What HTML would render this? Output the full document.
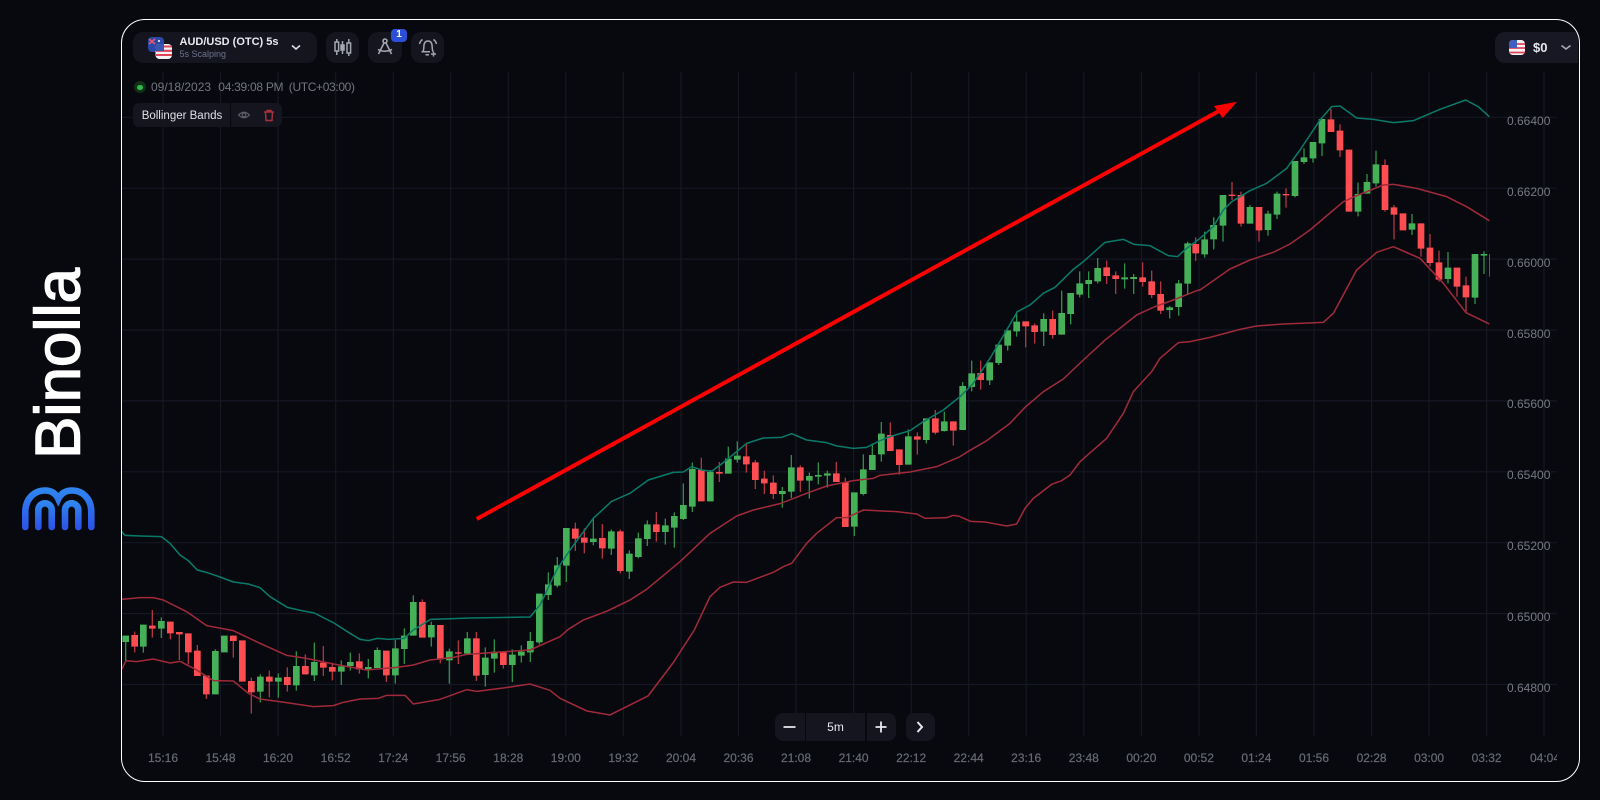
<!DOCTYPE html>
<html lang="en"><head><meta charset="utf-8"><title>Binolla AUD/USD Bollinger Bands</title>
<style>
html,body{margin:0;padding:0;background:#07090f;}
#p{position:relative;width:1600px;height:800px;overflow:hidden;background:#07090f;font-family:"Liberation Sans",sans-serif;}
#p svg{position:absolute;left:0;top:0;}
.a{position:absolute;white-space:nowrap;}
.pill{position:absolute;background:#14151f;}
.t{position:absolute;top:751px;width:50px;margin-left:-25px;text-align:center;font-size:12px;line-height:14px;color:#686a74;-webkit-text-stroke:.2px #686a74;}
.y{position:absolute;left:1507px;font-size:12px;line-height:14px;color:#777983;}
.d{position:absolute;top:80px;font-size:12px;line-height:14px;color:#74767f;white-space:nowrap;}
.gw{stroke:#2f8f48;stroke-width:4;fill:none}
.gb{stroke:#45b058;stroke-width:20;fill:none}
.rw{stroke:#b03540;stroke-width:4;fill:none}
.rb{stroke:#ff4d52;stroke-width:20;fill:none}
.up{stroke:#0a7a68;stroke-width:4.6;fill:none;stroke-linejoin:round}
.re{stroke:#a02a3a;stroke-width:4.6;fill:none;stroke-linejoin:round}
</style></head><body><div id="p">

<svg width="1600" height="800" viewBox="0 0 1600 800">
<defs>
<linearGradient id="lg" x1="0" y1="0" x2="0" y2="1"><stop offset="0" stop-color="#2f84ee"/><stop offset="1" stop-color="#2d55e8"/></linearGradient>
<clipPath id="c"><rect x="122" y="70" width="1368" height="670"/></clipPath>
</defs>
<g stroke="#161723" stroke-width="1.2" fill="none">
<path d="M163 72V736M220.5 72V736M278 72V736M335.7 72V736M393.2 72V736M450.7 72V736M508.3 72V736M565.8 72V736M623.4 72V736M681 72V736M738.5 72V736M796 72V736M853.6 72V736M911.2 72V736M968.7 72V736M1026.2 72V736M1083.8 72V736M1141.4 72V736M1198.9 72V736M1256.4 72V736M1314 72V736M1371.6 72V736M1429.1 72V736M1486.6 72V736M1544 72V736"/>
<path d="M122 117.3H1557M122 188.2H1557M122 259.1H1557M122 330H1557M122 400.9H1557M122 471.8H1557M122 542.7H1557M122 613.6H1557M122 684.5H1557"/>
</g>
<g clip-path="url(#c)">
<g transform="translate(120 510) scale(.33333)">
<path class="gw" d="M17 377V455M70 344V428M124 322V384M286 418V553M421 493V577M475 490V563M529 424V542M583 398V513M664 451V525M691 428V482M745 447V505M772 412V474M826 390V521M853 355V462M880 256V377M934 335V410M988 416V521M1042 366V431M1096 412V530M1123 388V488M1177 418V516M1204 406V458M1231 366V456M1258 251V403"/>
<path class="rw" d="M44 365V427M97 300V383M151 335V388M178 366V450M205 370V463M232 405V498M259 497V567M340 377V443M394 503V611M448 482V562M502 472V545M556 433V493M610 408V498M637 458V511M718 430V491M799 422V516M907 268V383M961 345V460M1015 391V462M1069 366V513M1150 427V476"/>
<path class="gb" d="M17 377V396M70 344V410M124 333V356M286 423V553M313 377V427M421 500V545M475 503V515M529 468V526M583 456V496M664 469V485M691 456V468M745 471V480M772 420V474M826 415V496M853 377V417M880 276V377M934 345V382M988 424V451M1042 385V431M1096 443V495M1123 425V446M1177 434V465M1204 425V437M1231 393V427M1258 251V397"/>
<path class="rb" d="M44 375V410M97 347V356M151 335V370M178 366V373M205 370V427M232 422V498M259 497V553M340 377V393M367 391V515M394 513V547M448 500V515M502 501V525M556 468V493M610 458V473M637 471V485M718 454V478M799 422V496M907 276V383M961 345V448M1015 427V431M1069 385V497M1150 427V465"/>
</g>
<g transform="translate(520 410) scale(.33333)">
<path class="gw" d="M85 487V570M112 441V532M139 354V516M220 323V406M274 358V435M328 421V507M355 368V445M382 331V408M436 326V404M463 307V413M490 220V330M517 158V306M571 180V274M625 110V191M652 94V158M787 231V293M814 135V264M868 188V266M895 157V223M922 182V233M1003 247V378M1030 133V256M1057 100V180M1084 36V155M1165 58V164M1219 25V100M1273 5V65"/>
<path class="rw" d="M166 338V423M193 355V430M247 342V446M301 358V490M409 306V395M544 143V274M598 156V216M679 102V188M706 150V237M733 182V252M760 196V267M841 166V246M949 156V216M976 203V351M1111 37V123M1138 118V194M1192 67V134M1246 0V73M1300 34V107"/>
<path class="gb" d="M85 523V555M112 466V527M139 354V467M220 386V396M274 364V416M328 431V485M355 385V441M382 343V387M436 346V366M463 318V353M490 285V327M517 177V290M571 186V274M625 146V191M652 137V149M787 243V252M814 172V245M868 198V212M895 195V200M922 190V197M1003 247V350M1030 178V252M1057 135V180M1084 71V133M1165 79V164M1219 25V90M1273 34V63"/>
<path class="rb" d="M166 356V386M193 383V398M247 384V415M301 364V483M409 343V366M544 180V274M598 186V191M679 139V163M706 157V210M733 206V220M760 218V252M841 172V212M949 190V216M976 216V351M1111 75V123M1138 118V165M1192 79V89M1246 25V68M1300 34V62"/>
</g>
<g transform="translate(940 250) scale(.33333)">
<path class="gw" d="M68 396V540M95 332V424M149 337V405M176 284V345M203 241V302M230 185V260M311 190V288M365 122V254M392 129V223M419 64V142M446 64V144M473 24V100M554 40V116M581 72V132M689 168V205M716 90V197"/>
<path class="rw" d="M122 332V419M257 214V292M284 220V281M338 182V266M500 32V102M527 64V132M608 37V110M635 62V144M662 94V192"/>
<path class="gb" d="M68 408V540M95 370V411M149 337V391M176 284V339M203 241V287M230 215V244M311 207V245M365 189V254M392 129V192M419 100V134M446 90V102M473 54V94M554 82V88M581 81V87M689 172V180M716 100V171"/>
<path class="rb" d="M122 369V390M257 214V229M284 226V246M338 207V255M500 52V78M527 76V87M608 82V96M635 94V135M662 132V182"/>
</g>
<g transform="translate(1040 215) scale(.33333)">
<path class="gw" d="M443 80V240M494 50V128M521 8V100"/>
<path class="rw" d="M467 67V138"/>
<path class="gb" d="M443 85V206M494 73V118M521 30V72"/>
<path class="rb" d="M467 87V115"/>
</g>
<g transform="translate(1200 90) scale(.33333)">
<path class="gw" d="M41 382V478M69 315V455M150 345V401M204 362V437M231 305V387M285 213V322M312 175V222M339 156V218M366 87V198M474 278V379M501 252V311M528 182V290M636 372V435M744 486V580M825 492V642M852 484V552"/>
<path class="rw" d="M96 276V330M123 305V410M177 351V455M258 295V353M393 57V126M420 103V201M447 179V365M555 208V365M582 345V448M663 400V500M690 432V530M717 482V575M771 533V620M798 560V668M869 492V560"/>
<path class="gb" d="M41 405V448M69 315V407M150 351V401M204 371V420M231 311V374M285 213V318M312 202V216M339 156V205M366 87V160M474 312V365M501 276V311M528 223V280M636 400V419M744 533V567M825 492V623M852 492V497"/>
<path class="rb" d="M96 314V318M123 315V401M177 351V421M258 312V316M393 88V126M420 122V181M447 179V365M555 225V360M582 352V374M609 370V421M663 400V476M690 473V519M717 517V569M771 533V590M798 586V622"/>
</g>
<!-- upper band -->
<g transform="translate(120 510) scale(.33333)"><path class="up" d="M5 65L15 76L60 78L124 80L150 100L180 135L205 152L232 180L262 188L300 201L340 216L385 222L420 233L450 260L502 292L545 302L583 309L640 338L690 370L720 388L745 392L772 385L805 388L853 385L880 360L932 328L1000 326L1050 324L1230 321L1260 285L1310 180"/></g>
<g transform="translate(520 410) scale(.33333)"><path class="up" d="M110 480L150 420L220 325L275 274L330 250L385 210L460 187L490 186L515 170L545 180L575 184L620 150L680 100L730 84L785 82L815 71L860 90L920 98L950 108L1000 115L1040 112L1080 92L1110 80L1170 62L1210 35L1270 0"/></g>
<g transform="translate(940 250) scale(.33333)"><path class="up" d="M10 480L60 440L100 400L150 325L200 240L232 185L270 165L310 130L345 112"/></g>
<g transform="translate(1040 215) scale(.33333)"><path class="up" d="M45 217L100 163L130 140L195 82L250 73L282 88L330 92L385 122L412 125L440 100L480 70"/></g>
<g transform="translate(1200 90) scale(.33333)"><path class="up" d="M0 445L40 410L70 360L95 335L150 302L200 280L260 235L300 180L360 90L395 50L420 48L470 84L520 88L580 98L640 92L720 58L797 30L835 50L868 80"/></g>
<!-- middle band -->
<g transform="translate(120 510) scale(.33333)"><path class="re" d="M5 268L60 263L100 263L130 270L200 305L260 347L340 362L420 400L500 436L560 445L640 462L740 480L830 472L880 465L930 450L1000 442L1040 433L1230 420L1320 380L1345 358"/></g>
<g transform="translate(520 410) scale(.33333)"><path class="re" d="M145 658L190 630L260 604L330 570L380 538L480 455L570 370L650 318L700 300L780 281L860 250L920 228L1000 212L1060 205L1080 196L1170 186L1250 170L1320 140"/></g>
<g transform="translate(950 320) scale(.33333)"><path class="re" d="M30 410L50 397L110 362L180 310L225 262L280 215L340 177L400 120L460 65"/></g>
<g transform="translate(940 250) scale(.33333)"><path class="re" d="M489 275L590 195L640 172L700 150L770 122"/></g>
<g transform="translate(1200 90) scale(.33333)"><path class="re" d="M-10 602L0 600L90 537L150 510L220 487L270 462L330 420L430 335L470 317L550 285L580 283L650 295L740 320L800 350L868 392"/></g>
<!-- lower band -->
<g transform="translate(120 510) scale(.33333)"><path class="re" d="M5 478L18 452L50 455L100 447L150 459L180 454L230 480L280 512L340 513L385 550L420 567L500 578L580 590L640 587L670 577L720 567L775 565L800 556L855 556L880 582L960 568L1040 539L1070 544L1150 534L1230 522L1290 541L1320 565L1401 603L1470 615L1584 558L1659 459L1723 360"/></g>
<g transform="translate(520 410) scale(.33333)"><path class="re" d="M523 660L570 560L600 532L640 516L680 517L760 487L790 470L815 460L860 400L890 370L950 323L980 323L1030 300L1130 305L1190 312L1215 325L1280 323L1300 316L1320 319"/></g>
<g transform="translate(950 320) scale(.33333)"><path class="re" d="M30 590L62 604L105 606L170 618L200 612L225 565L250 535L305 493L335 482L360 465L390 425L470 355L520 280L550 215L605 155L630 115L685 68L720 65L780 52"/></g>
<g transform="translate(1200 90) scale(.33333)"><path class="re" d="M30 742L120 718L170 708L250 702L370 697L400 670L470 540L530 487L580 470L660 505L730 580L798 668L868 702"/></g>
</g>
<!-- arrow -->
<path d="M476.7 519L1219 111" stroke="#fe0000" stroke-width="4" fill="none"/>
<path d="M1237 101.7L1214 106L1222.7 118Z" fill="#fe0000"/>
<!-- logo -->
<g fill="none" stroke="url(#lg)" stroke-width="6.6" stroke-linecap="round">
<path d="M25.3 527V512C25.3 498 35 490.5 45 490.5C52 490.5 56 494 58.3 499C60.7 494 65 490.5 72 490.5C82 490.5 91.3 498 91.3 512V527"/>
<path d="M38.3 527V510A6.7 6.7 0 0 1 51.7 510V527"/>
<path d="M65 527V510A6.65 6.65 0 0 1 78.3 510V527"/>
</g>
<text transform="translate(79.5 459) rotate(-90)" x="0" y="0" font-family="Liberation Sans" font-size="63" fill="#fff" stroke="#fff" stroke-width="1.5" textLength="191" lengthAdjust="spacingAndGlyphs">Binolla</text>
</svg>

<div class="y" style="top:114px">0.66400</div>
<div class="y" style="top:185px">0.66200</div>
<div class="y" style="top:256px">0.66000</div>
<div class="y" style="top:327px">0.65800</div>
<div class="y" style="top:397px">0.65600</div>
<div class="y" style="top:468px">0.65400</div>
<div class="y" style="top:539px">0.65200</div>
<div class="y" style="top:610px">0.65000</div>
<div class="y" style="top:681px">0.64800</div>

<div class="t" style="left:163px">15:16</div><div class="t" style="left:220.5px">15:48</div><div class="t" style="left:278px">16:20</div><div class="t" style="left:335.7px">16:52</div><div class="t" style="left:393.2px">17:24</div><div class="t" style="left:450.7px">17:56</div><div class="t" style="left:508.3px">18:28</div><div class="t" style="left:565.8px">19:00</div><div class="t" style="left:623.4px">19:32</div><div class="t" style="left:681px">20:04</div><div class="t" style="left:738.5px">20:36</div><div class="t" style="left:796px">21:08</div><div class="t" style="left:853.6px">21:40</div><div class="t" style="left:911.2px">22:12</div><div class="t" style="left:968.7px">22:44</div><div class="t" style="left:1026.2px">23:16</div><div class="t" style="left:1083.8px">23:48</div><div class="t" style="left:1141.4px">00:20</div><div class="t" style="left:1198.9px">00:52</div><div class="t" style="left:1256.4px">01:24</div><div class="t" style="left:1314px">01:56</div><div class="t" style="left:1371.6px">02:28</div><div class="t" style="left:1429.1px">03:00</div><div class="t" style="left:1486.6px">03:32</div>
<div class="a" style="left:1530px;top:751px;width:27px;overflow:hidden;font-size:12px;line-height:14px;color:#686a74;-webkit-text-stroke:.2px #686a74">04:04</div>

<!-- top bar -->
<div class="pill" style="left:133px;top:32px;width:184px;height:31px;border-radius:10px"></div>
<svg style="left:147px;top:36px" width="26" height="24" viewBox="0 0 26 24">
<rect x="1" y="1" width="16" height="15" rx="4" fill="#2b47a8"/>
<path d="M2 3L8 8M8 3L2 8" stroke="#e8566a" stroke-width="1.6"/>
<circle cx="12" cy="5" r="1" fill="#fff"/><circle cx="14" cy="11" r="1" fill="#fff"/>
<rect x="8.5" y="8" width="16.5" height="15" rx="4" fill="#f4f4f6"/>
<path d="M9 10.5H25M9 14.8H25M9 19H25" stroke="#e0435a" stroke-width="2.1"/>
<path d="M8.5 12a4 4 0 0 1 4-4H17V15H8.5Z" fill="#3a55b0"/>
</svg>
<div class="a" style="left:179.5px;top:35px;font-size:11px;line-height:14px;font-weight:700;color:#e9eaf2">AUD/USD (OTC) 5s</div>
<div class="a" style="left:179.5px;top:48px;font-size:9px;line-height:12px;color:#6f7390">5s Scalping</div>
<svg style="left:290px;top:43px" width="12" height="9" viewBox="0 0 12 9"><path d="M2 2.5L6 6L10 2.5" stroke="#d8d9e0" stroke-width="1.6" fill="none"/></svg>

<div class="pill" style="left:325.7px;top:32px;width:33px;height:31px;border-radius:10px"></div>
<svg style="left:332px;top:37px" width="22" height="21" viewBox="0 0 22 21" fill="none" stroke="#a4a6b0" stroke-width="1.5">
<rect x="3" y="5" width="3.6" height="9"/><path d="M4.8 2V5M4.800 14V18"/>
<rect x="9" y="8" width="3" height="5" fill="#a4a6b0"/><path d="M10.500 4V8M10.500 13V17"/>
<rect x="15" y="6" width="3.600" height="10"/><path d="M16.800 2V6M16.800 16V19"/>
</svg>
<div class="pill" style="left:368.3px;top:32px;width:33.4px;height:31px;border-radius:10px"></div>
<svg style="left:375px;top:36px" width="20" height="22" viewBox="0 0 20 22" fill="none" stroke="#a4a6b0" stroke-width="1.600">
<circle cx="10" cy="5" r="2"/><path d="M9 7L3.500 18M11 7L16.500 18M3 13.500Q10 17 17 13.500"/>
</svg>
<div class="a" style="left:391.3px;top:29px;width:15.5px;height:13px;border-radius:4px;background:#2b4fd8;color:#fff;font-size:10px;font-weight:700;line-height:11px;text-align:center">1</div>
<div class="pill" style="left:411px;top:32px;width:33.4px;height:31px;border-radius:10px"></div>
<svg style="left:417px;top:36px" width="22" height="22" viewBox="0 0 22 22" fill="none" stroke="#a4a6b0" stroke-width="1.500">
<path d="M6 15.500C7 13.500 6.700 11 7 9C7.400 6.200 9 5 11 5C13 5 14.600 6.200 15 9C15.300 11 15 13.500 16 15.500"/>
<path d="M4.500 15.800H13M2.500 8C3 6 4 4.500 5.500 3.500M19.500 8C19 6 18 4.500 16.500 3.500M16.500 15.500V20.500M14 18H19M8.500 18.800H12"/>
</svg>

<div class="a" style="left:134px;top:81.3px;width:12px;height:12px;border-radius:50%;background:#10301a"></div>
<div class="a" style="left:137.3px;top:84.6px;width:5.4px;height:5.4px;border-radius:50%;background:#2fb84a"></div>
<div class="d" style="left:151px">09/18/2023</div>
<div class="d" style="left:218.3px;letter-spacing:-.28px">04:39:08 PM</div>
<div class="d" style="left:288.8px;letter-spacing:-.35px">(UTC+03:00)</div>

<div class="pill" style="left:133px;top:103.3px;width:97px;height:24px;border-radius:6px 0 0 6px"></div>
<div class="pill" style="left:231px;top:103.3px;width:50.7px;height:24px;border-radius:0 6px 6px 0"></div>
<div class="a" style="left:141.7px;top:109px;font-size:11.5px;line-height:14px;color:#dfe0e8">Bollinger Bands</div>
<svg style="left:237px;top:109px" width="14" height="12" viewBox="0 0 14 12" fill="none" stroke="#5c5e68" stroke-width="1.2"><path d="M1.500 6Q7 .5 12.500 6Q7 11.500 1.500 6Z"/><circle cx="7" cy="6" r="1.800"/></svg>
<svg style="left:263px;top:108.5px" width="12" height="13" viewBox="0 0 12 13" fill="none" stroke="#a8303a" stroke-width="1.5"><path d="M1 3H11M4 3V1.500H8V3M2.500 3L3 11.500H9L9.500 3"/></svg>

<div class="pill" style="left:1495px;top:32px;width:83px;height:31px;border-radius:10px 0 0 10px;background:#171823"></div>
<svg style="left:1509px;top:40px" width="16" height="15" viewBox="0 0 16 15">
<rect width="16" height="15" rx="4" fill="#f4f4f6"/>
<path d="M0 4H16M0 8H16M0 12.500H16" stroke="#e0435a" stroke-width="1.800"/>
<path d="M0 4a4 4 0 0 1 4-4H8V8H0Z" fill="#3f5fc0"/>
</svg>
<div class="a" style="left:1533px;top:39.5px;font-size:13px;line-height:15px;font-weight:700;color:#e6e8f0">$0</div>
<svg style="left:1560px;top:43px" width="12" height="9" viewBox="0 0 12 9"><path d="M1.500 2.500L6 6L10.500 2.500" stroke="#a8a9b2" stroke-width="1.600" fill="none"/></svg>

<!-- bottom controls -->
<div class="pill" style="left:775px;top:713.3px;width:29.5px;height:27.4px;border-radius:8px 0 0 8px"></div>
<div class="pill" style="left:806px;top:713.3px;width:59px;height:27.4px"></div>
<div class="pill" style="left:866.5px;top:713.3px;width:29.2px;height:27.4px;border-radius:0 8px 8px 0"></div>
<div class="pill" style="left:906px;top:713.3px;width:29px;height:27.4px;border-radius:8px"></div>
<svg style="left:775px;top:713px" width="165" height="28" viewBox="0 0 165 28" fill="none" stroke="#e8e9ee" stroke-width="1.800">
<path d="M8.500 14H20.500M100.500 14H111.500M106 8.500V19.500"/><path d="M142.500 9L147 14L142.500 19" stroke-width="2"/>
</svg>
<div class="a" style="left:806px;top:720px;width:59px;text-align:center;font-size:12px;line-height:14px;color:#e6e8f0">5m</div>

<!-- frame -->
<div class="a" style="left:121px;top:19px;width:1456.5px;height:761px;border:1.5px solid #fff;border-radius:24px"></div>
</div></body></html>
